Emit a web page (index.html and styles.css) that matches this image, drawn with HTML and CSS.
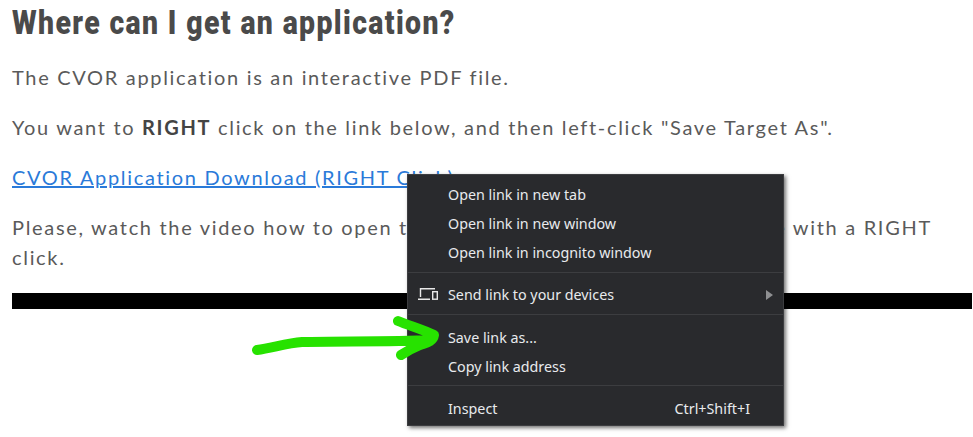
FILE: index.html
```html
<!DOCTYPE html>
<html lang="en">
<head>
<meta charset="utf-8">
<title>Where can I get an application?</title>
<link rel="stylesheet" href="styles.css">
</head>
<body>
<main class="article">
  <h1 class="title">Where can I get an application?</h1>
  <p class="copy">The CVOR application is an interactive PDF file.</p>
  <p class="copy">You want to <strong>RIGHT</strong> click on the link below, and then left-click "Save Target As".</p>
  <p class="copy"><a class="link" href="#">CVOR Application Download (RIGHT Click)</a></p>
  <p class="copy">Please, watch the video how to open the application and save this PDF file with a RIGHT click.</p>
  <div class="bar"></div>
</main>
<nav class="menu">
  <div class="group">
    <div class="item"><span>Open link in new tab</span></div>
    <div class="item"><span>Open link in new window</span></div>
    <div class="item"><span>Open link in incognito window</span></div>
  </div>
  <div class="group group-send">
    <div class="item">
      <svg class="devices" width="21" height="15" viewBox="0 0 21 15" aria-hidden="true">
        <path d="M2.5 10V1.7H17M0 12.2H12" fill="none" stroke="#e8e8e8" stroke-width="1.4"/>
        <rect x="14.7" y="4.7" width="4.6" height="7.5" fill="none" stroke="#e8e8e8" stroke-width="1.4"/>
      </svg>
      <span>Send link to your devices</span>
      <i class="caret"></i>
    </div>
  </div>
  <div class="group">
    <div class="item"><span>Save link as...</span></div>
    <div class="item"><span>Copy link address</span></div>
  </div>
  <div class="group group-last">
    <div class="item"><span>Inspect</span><kbd class="keys">Ctrl+Shift+I</kbd></div>
  </div>
</nav>
<svg class="arrow" width="973" height="437" viewBox="0 0 973 437" aria-hidden="true">
  <path d="M257 350C272 348 287 343 302 342C340 341 390 342 431 340M398 321C410 326 422 329 434 335C433 342 425 343 420 345C413 348 407 351 401 355" fill="none" stroke="#27e200" stroke-width="10" stroke-linecap="round" stroke-linejoin="round"/>
</svg>
</body>
</html>
```
FILE: styles.css
```css
html, body {
  margin: 0;
  background: #fff;
}
body {
  width: 973px;
  height: 437px;
  overflow: hidden;
  position: relative;
}
.article {
  padding: 0 1px 0 12px;
  font-family: Lato, "Open Sans", sans-serif;
  color: #5a5a5a;
}
.title {
  margin: 0 0 20px;
  height: 42px;
  font-family: Roboto, sans-serif;
  font-size: 33px;
  line-height: 45px;
  font-weight: 900;
  letter-spacing: 1.6px;
  color: #4a4a4a;
  white-space: nowrap;
  transform: scaleX(.86);
  transform-origin: left center;
}
.copy {
  margin: 0 0 20px;
  font-size: 20px;
  line-height: 30px;
  letter-spacing: 1.68px;
}
.copy strong {
  color: #444;
}
.link {
  color: #2a7ad9;
  text-decoration: underline;
}
.bar {
  height: 16px;
  margin-top: 21px;
  background: #000;
}
.menu {
  position: absolute;
  left: 407px;
  top: 174px;
  width: 377px;
  height: 252px;
  box-sizing: border-box;
  padding: 5px 0;
  background: #292a2d;
  border: 1px solid #3c3d40;
  box-shadow: 2px 2px 4px rgba(0, 0, 0, .55);
  font-family: "Noto Sans", sans-serif;
  font-size: 14.3px;
  color: #e8eaed;
}
.group + .group {
  margin-top: 5px;
  padding-top: 8px;
  border-top: 1px solid #3c3d40;
}
.group + .group-send {
  padding-top: 7px;
}
.group + .group-last {
  margin-top: 4px;
}
.item {
  position: relative;
  display: flex;
  align-items: center;
  height: 29px;
  padding: 0 10px 0 40px;
}
.devices {
  position: absolute;
  left: 10px;
  top: 7px;
}
.caret {
  margin-left: auto;
  border-left: 7px solid #8e8f91;
  border-top: 5px solid transparent;
  border-bottom: 5px solid transparent;
}
.keys {
  margin-left: auto;
  padding-right: 23px;
  font: inherit;
}
.arrow {
  position: absolute;
  left: 0;
  top: 0;
  pointer-events: none;
}
```
